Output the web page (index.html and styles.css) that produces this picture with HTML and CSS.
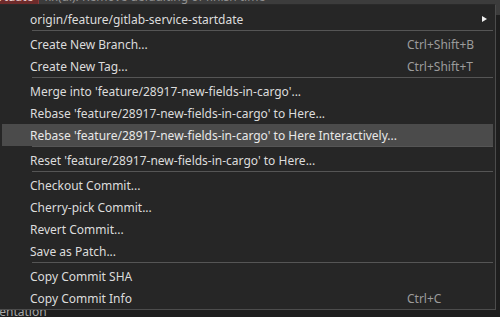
FILE: index.html
```html
<!DOCTYPE html>
<html>
<head>
<meta charset="utf-8">
<link rel="stylesheet" href="styles.css">
</head>
<body>
<div class="log">
  <div class="row row-sel">
    <div class="row-line"><span class="tag">startdate</span><span class="msg">fix(ui): Remove defaulting of finish time</span></div>
  </div>
  <div class="row-fill"></div>
  <div class="row row-bottom">
    <div class="row-line"><span class="msg">mentation</span></div>
  </div>
</div>

<div class="menu">
  <div class="item has-sub"><span class="label">origin/feature/gitlab-service-startdate</span><span class="arrow"></span></div>
  <div class="sep"></div>
  <div class="item"><span class="label">Create New Branch...</span><span class="key">Ctrl+Shift+B</span></div>
  <div class="item"><span class="label">Create New Tag...</span><span class="key">Ctrl+Shift+T</span></div>
  <div class="sep"></div>
  <div class="item"><span class="label">Merge into 'feature/28917-new-fields-in-cargo'...</span></div>
  <div class="item"><span class="label">Rebase 'feature/28917-new-fields-in-cargo' to Here...</span></div>
  <div class="item active"><span class="label">Rebase 'feature/28917-new-fields-in-cargo' to Here Interactively...</span></div>
  <div class="sep"></div>
  <div class="item"><span class="label">Reset 'feature/28917-new-fields-in-cargo' to Here...</span></div>
  <div class="sep"></div>
  <div class="item"><span class="label">Checkout Commit...</span></div>
  <div class="item"><span class="label">Cherry-pick Commit...</span></div>
  <div class="item"><span class="label">Revert Commit...</span></div>
  <div class="item"><span class="label">Save as Patch...</span></div>
  <div class="sep"></div>
  <div class="item"><span class="label">Copy Commit SHA</span></div>
  <div class="item"><span class="label">Copy Commit Info</span><span class="key">Ctrl+C</span></div>
</div>
</body>
</html>
```

FILE: styles.css
```css
html, body {
  margin: 0;
  padding: 0;
  width: 500px;
  height: 317px;
  overflow: hidden;
  background: #1e1e1e;
  font-family: "Noto Sans", "Open Sans", sans-serif;
  font-size: 12px;
}

.log {
  display: flex;
  flex-direction: column;
  height: 317px;
}

.row {
  overflow: hidden;
}

.row-sel {
  height: 15px;
  background: #3c3c3c;
}

.row-sel .row-line {
  margin-top: -14px;
}

.row-line {
  display: flex;
  align-items: center;
  height: 22px;
  line-height: 22px;
  white-space: nowrap;
}

.tag {
  display: inline-block;
  background: #6e2b2b;
  color: #e6c8c8;
  padding: 0 5px;
  margin-left: -24px;
  margin-right: 5px;
  line-height: 20px;
  border: 1px solid #8a3a3a;
}

.msg {
  color: #8f8f8f;
}

.row-fill {
  flex: 1;
}

.row-bottom {
  height: 10px;
}

.row-bottom .row-line {
  margin-top: -6px;
  color: #9a9a9a;
}

.row-bottom .msg {
  color: #a8a8a8;
  margin-left: -12px;
}

.menu {
  position: absolute;
  left: -1px;
  top: 4px;
  width: 497px;
  box-sizing: border-box;
  background: #262626;
  border: 1px solid #4c4c4c;
  border-top-color: #2a2a2a;
  padding: 3px 2px 0 2px;
  color: #dcdcdc;
}

.item {
  display: grid;
  grid-template-columns: 377px 1fr;
  align-items: center;
  height: 22px;
  padding-left: 28px;
  white-space: nowrap;
}

.item.active {
  background: #4b4b4b;
  color: #e8e8e8;
}

.key {
  color: #9c9c9c;
}

.has-sub {
  grid-template-columns: 1fr auto;
  padding-right: 6px;
}

.arrow {
  width: 0;
  height: 0;
  border-top: 3.5px solid transparent;
  border-bottom: 3.5px solid transparent;
  border-left: 5px solid #f0f0f0;
}

.sep {
  height: 1px;
  background: #555555;
  margin: 0 0 2px 30px;
}
```
